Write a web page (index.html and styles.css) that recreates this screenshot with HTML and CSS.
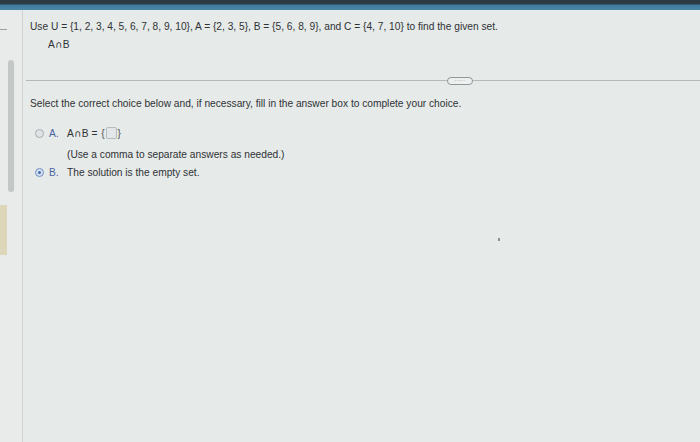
FILE: index.html
```html
<!DOCTYPE html>
<html>
<head>
<meta charset="utf-8">
<link rel="stylesheet" href="styles.css">
</head>
<body>
<div class="topbar"></div>
<div class="frame">
  <div class="side">
    <div class="dash"></div>
    <div class="scroll"></div>
    <div class="tan"></div>
  </div>
  <div class="main">
    <p class="q">Use U = {1, 2, 3, 4, 5, 6, 7, 8, 9, 10}, A = {2, 3, 5}, B = {5, 6, 8, 9}, and C = {4, 7, 10} to find the given set.</p>
    <p class="expr">A<span class="cap">∩</span>B</p>
    <div class="divider"><span class="pill">.....</span></div>
    <p class="instr">Select the correct choice below and, if necessary, fill in the answer box to complete your choice.</p>
    <div class="choice first">
      <span class="radio"></span><span class="letter">A.</span>
      <div class="ctext">
        <div>A<span class="cap">∩</span>B = <span class="brace">{</span><span class="box"></span><span class="brace">}</span></div>
        <div class="hint">(Use a comma to separate answers as needed.)</div>
      </div>
    </div>
    <div class="choice second">
      <span class="radio on"></span><span class="letter">B.</span>
      <div class="ctext">The solution is the empty set.</div>
    </div>
    <div class="dot"></div>
  </div>
</div>
</body>
</html>
```
FILE: styles.css
```css
html, body { margin: 0; padding: 0; }
body {
  width: 700px; height: 442px; overflow: hidden;
  background: #e6eae8;
  font-family: "Liberation Sans", Arial, sans-serif;
  color: #2f3236;
}
.topbar {
  height: 10px;
  background: linear-gradient(#2c3a43 0, #2c3a43 4px, #3d7c9d 5px, #4a86a6 10px);
}
.frame { display: flex; height: 432px; }
.side {
  width: 22px; border-right: 1px solid #cfd3d2;
  position: relative; background: #e8ebe9;
}
.dash { position: absolute; left: 0; top: 19px; width: 7px; height: 1px; background: #9aa0a0; }
.scroll { position: absolute; left: 8px; top: 50px; width: 6px; height: 132px; background: #c3c7c6; border-radius: 3px; }
.tan { position: absolute; left: 0; top: 195px; width: 7px; height: 50px; background: #ddd6b8; }
.main { flex: 1; padding-left: 7px; position: relative; }
p { margin: 0; }
.q { font-size: 10.2px; margin-top: 10px; line-height: 13px; }
.expr { font-size: 10.2px; margin-top: 5px; margin-left: 18px; line-height: 13px; }
.cap { font-family: "DejaVu Sans", sans-serif; font-size: 9.5px; margin: 0 0.5px; }
.divider {
  margin-top: 29px; margin-left: -4px; height: 1px; background: #b5b9b9;
  position: relative;
}
.pill {
  position: absolute; left: 421px; top: -3px; width: 24px; height: 6px;
  border: 1px solid #8f979b; border-radius: 4px; background: #eef0f0;
  font-size: 6px; line-height: 3px; text-align: center; color: #6b7477; letter-spacing: 0.5px;
}
.instr { font-size: 10.2px; margin-top: 16px; line-height: 13px; }
.choice { display: flex; align-items: flex-start; margin-left: 5px; font-size: 10.2px; line-height: 13px; }
.choice.first { margin-top: 17px; }
.choice.second { margin-top: 5px; }
.radio {
  width: 9px; height: 9px; border-radius: 50%; border: 1px solid #a5adb5;
  background: #dfe3e6; margin-top: 2px; box-sizing: border-box; position: relative;
}
.radio.on { border-color: #6f91c4; background: #d7e0ef; }
.radio.on::after {
  content: ""; position: absolute; left: 2px; top: 2px; width: 3px; height: 3px;
  border-radius: 50%; background: #3d6cb5;
}
.letter { color: #4a64a3; margin-left: 5px; width: 18px; }
.ctext { color: #2f3236; }
.brace { color: #555; margin: 0 1px; }
.box {
  display: inline-block; width: 9px; height: 10px; border: 1px solid #b6bcc0;
  background: #e3e7e9; vertical-align: -2px; border-radius: 2px;
}
.hint { margin-top: 8px; }
.dot { position: absolute; left: 475px; top: 228px; width: 2px; height: 3px; background: #8b9194; }
```
